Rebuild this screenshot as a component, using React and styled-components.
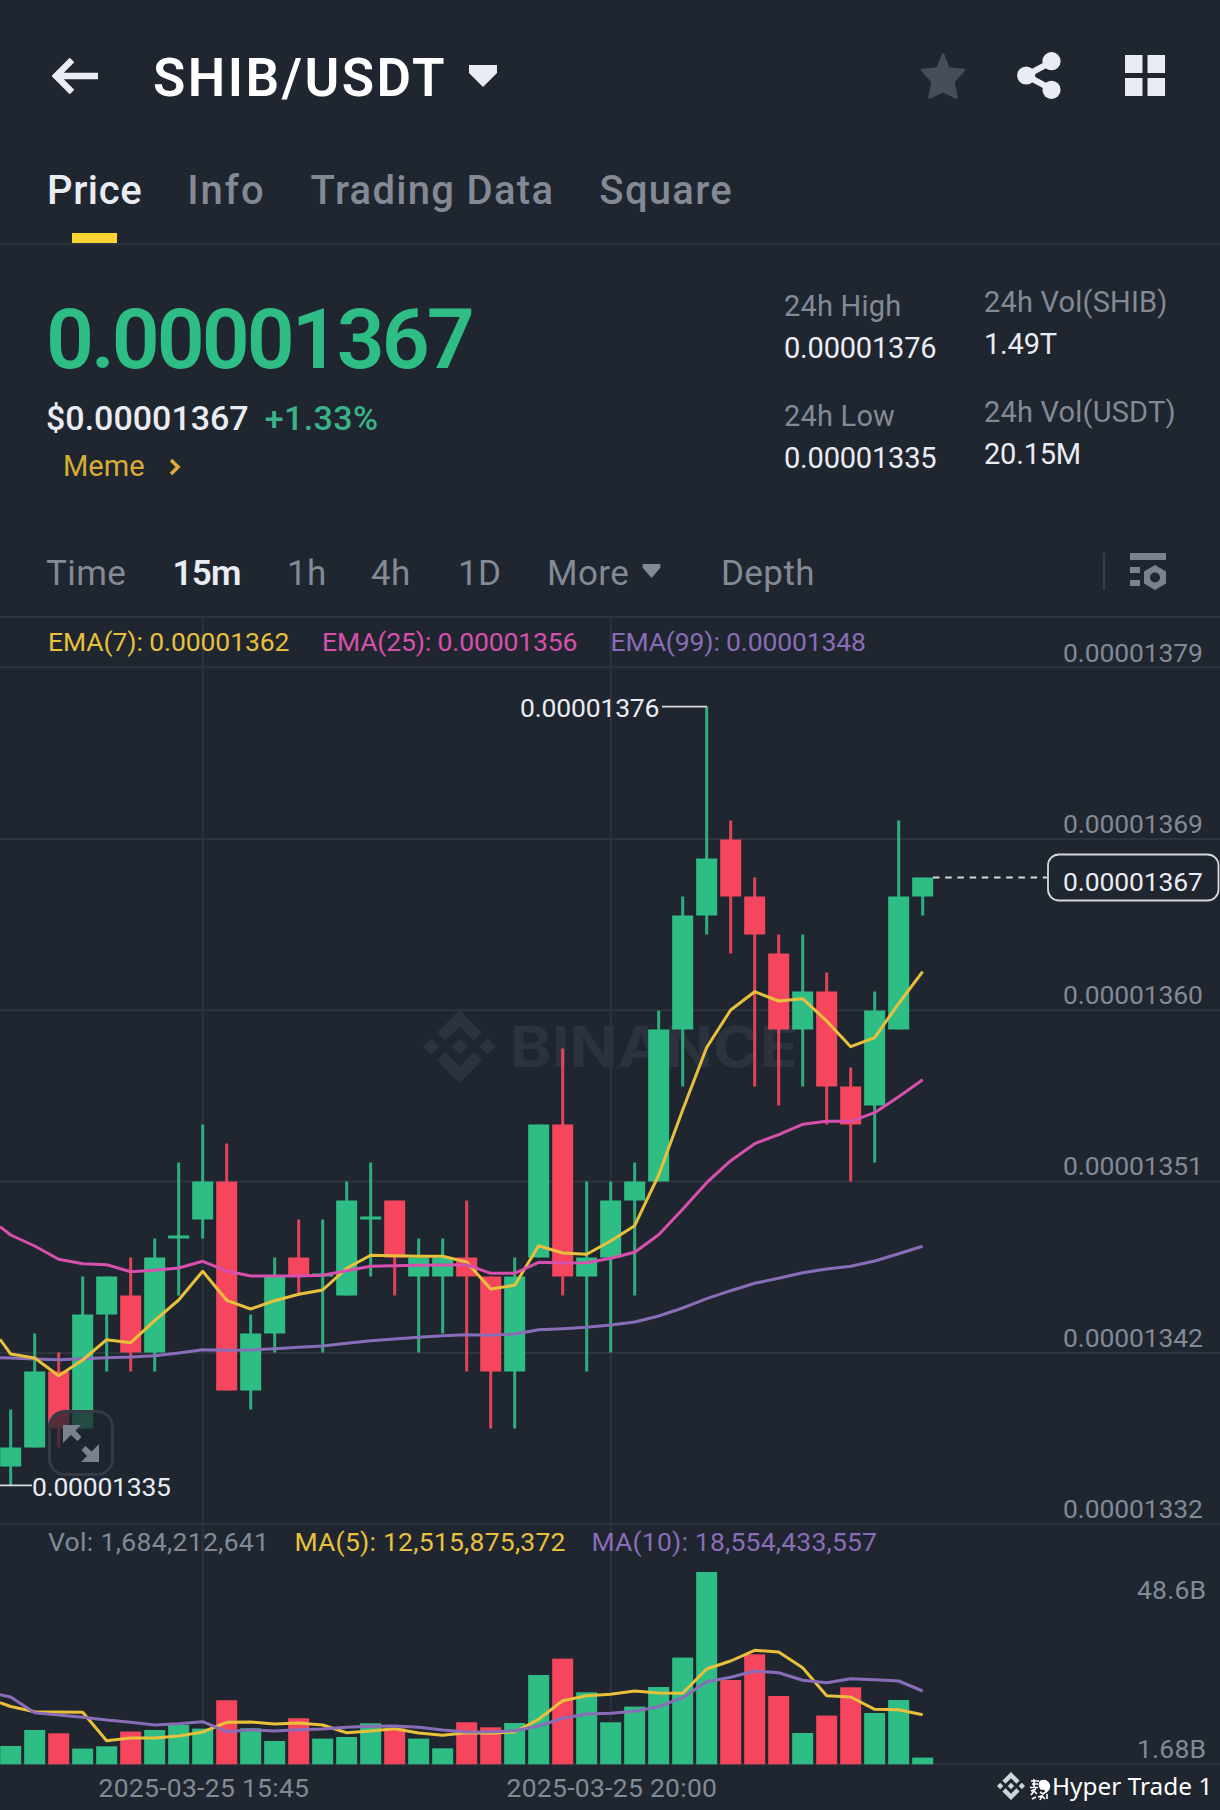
import styled, { createGlobalStyle } from "styled-components";

const COLORS = {
    bg: "#1f262f",
    line: "#2d343f",
    text: "#eaecf3",
    sub: "#848996",
    green: "#2ebd85",
    red: "#f6465d",
    yellow: "#e8c03c",
    pink: "#d850ae",
    purple: "#8a6db8",
};

// [body top, body bottom, high, low, up?, volume height]
const CANDLES = [
    [1337, 1336, 1339, 1335, 1, 18.3],
    [1341, 1337, 1343, 1337, 1, 34.3],
    [1341, 1338, 1342, 1337, 0, 31],
    [1344, 1338, 1346, 1338, 1, 15.7],
    [1346, 1344, 1346, 1341, 1, 18],
    [1345, 1342, 1347, 1341, 0, 32.7],
    [1347, 1342, 1348, 1341, 1, 34.3],
    [1348, 1348, 1352, 1345, 1, 39.3],
    [1351, 1349, 1354, 1348, 1, 35.7],
    [1351, 1340, 1353, 1340, 0, 64],
    [1343, 1340, 1344, 1339, 1, 36],
    [1346, 1343, 1347, 1342, 1, 23.3],
    [1347, 1346, 1349, 1345, 0, 46],
    [1346, 1346, 1349, 1342, 1, 25.7],
    [1350, 1345, 1351, 1345, 1, 27.3],
    [1349, 1349, 1352, 1346, 1, 41],
    [1350, 1347, 1350, 1345, 0, 36],
    [1347, 1346, 1348, 1342, 1, 25.7],
    [1347, 1346, 1348, 1343, 1, 16],
    [1347, 1346, 1350, 1341, 0, 42],
    [1346, 1341, 1346, 1338, 0, 37],
    [1346, 1341, 1347, 1338, 1, 41.3],
    [1354, 1347, 1354, 1347, 1, 89.3],
    [1354, 1346, 1358, 1345, 0, 105.7],
    [1347, 1346, 1351, 1341, 1, 72],
    [1350, 1347, 1351, 1342, 1, 42],
    [1351, 1350, 1352, 1345, 1, 57.7],
    [1359, 1351, 1360, 1351, 1, 77.3],
    [1365, 1359, 1366, 1356, 1, 106.7],
    [1368, 1365, 1376, 1364, 1, 192.3],
    [1369, 1366, 1370, 1363, 0, 84.3],
    [1366, 1364, 1367, 1356, 0, 110],
    [1363, 1359, 1364, 1355, 0, 68.3],
    [1361, 1359, 1364, 1356, 1, 31.3],
    [1361, 1356, 1362, 1354, 0, 48.7],
    [1356, 1354, 1357, 1351, 0, 77],
    [1360, 1355, 1361, 1352, 1, 51.3],
    [1366, 1359, 1370, 1359, 1, 64.3],
    [1367, 1366, 1367, 1365, 1, 6.7],
];

// the first value of every series sits on the left edge, before candle 0
const EMA7 = [
    1339.3, 1354, 1358, 1375.7, 1360, 1339.7, 1342.7, 1320.7, 1300, 1271.3, 1300.3, 1309, 1300.7,
    1294.3, 1290, 1268.3, 1255.3, 1255.7, 1256.3, 1256.3, 1262, 1289, 1285.3, 1245.7, 1253, 1254.3,
    1241, 1225.7, 1175, 1110, 1047.5, 1010, 991.7, 1001, 998.7, 1021, 1046.7, 1037.7, 1003.5, 971.7,
];
const EMA25 = [
    1226.7, 1235, 1246, 1259.3, 1263.7, 1264.7, 1271.7, 1270.3, 1268, 1261.3, 1271, 1276, 1276,
    1276, 1275.3, 1270.7, 1266.3, 1265.7, 1265.3, 1265, 1264.7, 1273.3, 1273.3, 1262.3, 1263,
    1262.7, 1258.3, 1252.3, 1234.7, 1209.3, 1182.7, 1160.7, 1143.7, 1134.7, 1124.3, 1121.3, 1121.3,
    1112.7, 1096.7, 1079.7,
];
const EMA99 = [
    1357.7, 1358, 1359, 1359.7, 1358.7, 1357.7, 1357, 1355.7, 1353, 1349.7, 1350.3, 1350, 1348.7,
    1347.3, 1346, 1343.3, 1340.7, 1339, 1337.3, 1335.7, 1334.7, 1335.3, 1334, 1329.7, 1328.7,
    1327.3, 1325, 1322, 1316, 1308, 1298.7, 1290.7, 1283.3, 1278.3, 1272.7, 1269, 1266.3, 1261,
    1253.7, 1246.3,
];
const VOL_MA5 = [
    1702.7, 1706.5, 1711.7, 1712, 1712.3, 1740.7, 1738, 1738, 1736, 1732, 1722.3, 1722, 1724, 1723,
    1725, 1732.7, 1731, 1728.7, 1733, 1735.3, 1732.7, 1733.3, 1732, 1719.3, 1700.7, 1695.7, 1694.3,
    1691, 1693, 1693.3, 1669, 1661, 1650.3, 1652, 1667.7, 1695.7, 1697, 1709.3, 1709.7, 1714.7,
];
const VOL_MA10 = [
    1694.7, 1697, 1712.7, 1715, 1717.3, 1720, 1722.3, 1725, 1723.7, 1721.7, 1731.7, 1729.7, 1731,
    1729.7, 1729, 1727.3, 1726.3, 1726, 1727.3, 1730, 1732, 1731.7, 1730.7, 1726, 1718.3, 1714,
    1713.3, 1711.3, 1706.7, 1697.7, 1681.7, 1677.3, 1671, 1672.7, 1680.3, 1682.7, 1678.7, 1679.7,
    1681, 1691,
];

const GRID_Y = [667.3, 839, 1010.3, 1181.5, 1353, 1524, 1764.3];
const GRID_X = [202.7, 610.7];
const VOLUME_BASE = 1764.3;

const AXIS = [
    ["0.00001379", 662],
    ["0.00001369", 833],
    ["0.00001360", 1004],
    ["0.00001351", 1175],
    ["0.00001342", 1347],
    ["0.00001332", 1518],
];

const LEGENDS = [
    ["EMA(7): 0.00001362", 48, 651, 241.5, COLORS.yellow],
    ["EMA(25): 0.00001356", 322, 651, 255.5, COLORS.pink],
    ["EMA(99): 0.00001348", 610.5, 651, 255.5, COLORS.purple],
    ["Vol: 1,684,212,641", 48, 1551, 221, COLORS.sub],
    ["MA(5): 12,515,875,372", 294.5, 1551, 271, COLORS.yellow],
    ["MA(10): 18,554,433,557", 591.5, 1551, 285.5, COLORS.purple],
    ["2025-03-25 15:45", 98.5, 1797, 210.5, COLORS.sub],
    ["2025-03-25 20:00", 506.5, 1797, 210.5, COLORS.sub],
    ["48.6B", 1137, 1599, 69, COLORS.sub],
    ["1.68B", 1137, 1758, 69, COLORS.sub],
];

const candleX = (i) => 10.67 + i * 24;
const priceY = (p) => 706.5 + (1376 - p) * 19;
const toPoints = (values) =>
    values.map((y, i) => `${i === 0 ? 0 : candleX(i - 1)},${y}`).join(" ");

function BinanceMark(props) {
    return (
        <svg viewBox="0 0 126.6 126.6" fill="currentColor" {...props}>
            <path d="M38.7 53.2 63.3 28.6 87.9 53.2 102.2 38.9 63.3 0 24.4 38.9z" />
            <path d="M0 63.3 14.3 49 28.6 63.3 14.3 77.6z" />
            <path d="M38.7 73.4 63.3 98 87.9 73.4 102.2 87.7 63.3 126.6 24.4 87.7z" />
            <path d="M98 63.3 112.3 49 126.6 63.3 112.3 77.6z" />
            <path d="M77.8 63.3 63.3 48.8 48.8 63.3 63.3 77.8z" />
        </svg>
    );
}

function Chart() {
    return (
        <ChartSvg viewBox="0 616 1220 1194">
            <g stroke={COLORS.line} strokeWidth="2">
                <line x1="0" x2="1220" y1="617" y2="617" />
                {GRID_Y.map((y) => (
                    <line key={y} x1="0" x2="1220" y1={y} y2={y} />
                ))}
                {GRID_X.map((x) => (
                    <line key={x} x1={x} x2={x} y1="617" y2="1764" />
                ))}
            </g>

            <g color="#2c333e">
                <BinanceMark x="423" y="1010" width="73" height="73" />
                <WatermarkText x="510" y="1067" textLength="288" lengthAdjust="spacingAndGlyphs">
                    BINANCE
                </WatermarkText>
            </g>

            {CANDLES.map(([top, bottom, high, low, up, volume], i) => {
                const x = candleX(i);
                const doji = top === bottom;
                return (
                    <g key={i} fill={up ? COLORS.green : COLORS.red}>
                        <rect
                            x={x - 1.5}
                            y={priceY(high)}
                            width="3"
                            height={priceY(low) - priceY(high)}
                            opacity="0.9"
                        />
                        <rect
                            x={x - 10.5}
                            y={priceY(top) - (doji ? 3 : 0)}
                            width="21"
                            height={doji ? 3 : priceY(bottom) - priceY(top)}
                        />
                        <rect x={x - 10.5} y={VOLUME_BASE - volume} width="21" height={volume} />
                    </g>
                );
            })}

            <g fill="none" strokeWidth="3" strokeLinejoin="round">
                <polyline points={toPoints(EMA99)} stroke={COLORS.purple} />
                <polyline points={toPoints(EMA7)} stroke={COLORS.yellow} />
                <polyline points={toPoints(EMA25)} stroke={COLORS.pink} />
                <polyline points={toPoints(VOL_MA5)} stroke={COLORS.yellow} />
                <polyline points={toPoints(VOL_MA10)} stroke={COLORS.purple} />
            </g>

            {LEGENDS.map(([label, x, y, width, color]) => (
                <ChartText key={label} x={x} y={y} textLength={width} fill={color}>
                    {label}
                </ChartText>
            ))}
            {AXIS.map(([label, y]) => (
                <ChartText key={label} x="1063" y={y} textLength="140" fill={COLORS.sub}>
                    {label}
                </ChartText>
            ))}

            <g stroke="#d5d8df" strokeWidth="1.8" fill="none">
                <line x1="662" x2="707" y1="706.7" y2="706.7" />
                <line x1="0" x2="32" y1="1485.4" y2="1485.4" />
                <line x1="933" x2="1047" y1="877.5" y2="877.5" strokeDasharray="6.5 5.7" />
                <rect x="1048" y="854.5" width="170.5" height="46" rx="11" fill={COLORS.bg} />
            </g>
            <ChartText x="520" y="717" textLength="139.5" fill={COLORS.text}>
                0.00001376
            </ChartText>
            <ChartText x="32" y="1496" textLength="139" fill={COLORS.text}>
                0.00001335
            </ChartText>
            <ChartText x="1063" y="890.5" textLength="140" fill={COLORS.text}>
                0.00001367
            </ChartText>
        </ChartSvg>
    );
}

function App() {
    return (
        <Page>
            <GlobalStyle />
            <Header>
                <BackIcon viewBox="0 0 46 36">
                    <path d="M20 2 4 18 20 34M4 18H46" />
                </BackIcon>
                <PairName>SHIB/USDT</PairName>
                <Caret width={28} height={22} viewBox="0 0 28 22" $color={COLORS.text}>
                    <path d="M0 0h28v8L14 22 0 8z" />
                </Caret>
                <HeaderIcons>
                    <svg width="46" height="48" viewBox="0 0 46 48" fill="#474d5b">
                        <path
                            d="M23 2.5 28.5 16.5 44 18 33.5 29.5 36.5 45.5 23 39 9.5 45.5 12.5 29.5 2 18 17.5 16.5z"
                            stroke="#474d5b"
                            strokeWidth="2.5"
                            strokeLinejoin="round"
                        />
                    </svg>
                    <svg width="44" height="47" viewBox="0 0 44 47" fill={COLORS.text}>
                        <path d="M35 9.5 9 23.5 35 37.5" fill="none" stroke={COLORS.text} strokeWidth="6" />
                        <circle cx="34.5" cy="9.2" r="9.1" />
                        <circle cx="9.2" cy="23.5" r="9.1" />
                        <circle cx="34.5" cy="37.8" r="9.1" />
                    </svg>
                    <svg width="40" height="41" viewBox="0 0 40 41" fill={COLORS.text}>
                        <path d="M0 0h17.5v18H0zM22.5 0H40v18H22.5zM0 23h17.5v18H0zM22.5 23H40v18H22.5z" />
                    </svg>
                </HeaderIcons>
            </Header>

            <Tabs>
                <Tab $active>Price</Tab>
                <Tab $spacing={2}>Info</Tab>
                <Tab>Trading Data</Tab>
                <Tab>Square</Tab>
            </Tabs>

            <Summary>
                <PriceBox>
                    <LastPrice>0.00001367</LastPrice>
                    <FiatRow>
                        <span>$0.00001367</span>
                        <Change>+1.33%</Change>
                    </FiatRow>
                    <Tag>
                        Meme
                        <svg width="12" height="18" viewBox="0 0 12 18">
                            <path d="M2 2 9 9 2 16" fill="none" stroke="currentColor" strokeWidth="3.6" />
                        </svg>
                    </Tag>
                </PriceBox>
                <StatColumn $width={200} $top={3.5}>
                    <StatLabel>24h High</StatLabel>
                    <StatValue>0.00001376</StatValue>
                    <StatLabel>24h Low</StatLabel>
                    <StatValue>0.00001335</StatValue>
                </StatColumn>
                <StatColumn $width={236} $top={0}>
                    <StatLabel>24h Vol(SHIB)</StatLabel>
                    <StatValue>1.49T</StatValue>
                    <StatLabel>24h Vol(USDT)</StatLabel>
                    <StatValue>20.15M</StatValue>
                </StatColumn>
            </Summary>

            <Intervals>
                <Interval $width={126.5}>Time</Interval>
                <Interval $width={114.5} $active>
                    15m
                </Interval>
                <Interval $width={84}>1h</Interval>
                <Interval $width={87}>4h</Interval>
                <Interval $width={89}>1D</Interval>
                <Interval $width={174}>
                    More
                    <Caret width={19} height={14} viewBox="0 0 28 22" $color={COLORS.sub}>
                        <path d="M0 0h28v6L14 22 0 6z" />
                    </Caret>
                </Interval>
                <Interval $width={100}>Depth</Interval>
                <Settings>
                    <svg width="36" height="37" viewBox="0 0 36 37" fill="#7c818e">
                        <path d="M0 0h36v7H0zM0 14h10v6H0zM0 27h10v6H0z" />
                        <path
                            fillRule="evenodd"
                            d="M25 12 36 18.5v12L25 37 14 30.5v-12zM25 19.5a5 5 0 1 0 0 10 5 5 0 0 0 0-10z"
                        />
                    </svg>
                </Settings>
            </Intervals>

            <ChartArea>
                <Chart />
                <ExpandButton>
                    <svg width="36" height="37" viewBox="0 0 36 37" fill="#7c818e">
                        <path d="M0 0h18l-5.5 5.5 6 6.5-4 4-6.5-6L0 18z" />
                        <path d="M36 37H18l6-6-5.5-6 4-4 6 5.5L36 19z" />
                    </svg>
                </ExpandButton>
                <Author>
                    <BinanceMark width="28" height="28" />
                    <svg width="21" height="23" viewBox="0 0 21 23" fill="none" stroke="#fff" strokeWidth="1.6">
                        <path d="M1 3h8M2 6h6M0 9.5h8M4 1v9M1 13l5-2M1 17l3-4 3 3M2 21l4-2" />
                        <path d="M10 14l3 2 4-3M8 19l4-1 3 3M10 22l2-4M17 16v5" />
                        <path d="M9 4c3-4 10-2 11 3 1 4-2 7-5 8 1-3-1-4-4-3-2-2-3-5-2-8z" fill="#fff" stroke="none" />
                    </svg>
                    <AuthorName>Hyper Trade 1</AuthorName>
                </Author>
            </ChartArea>
        </Page>
    );
}

const GlobalStyle = createGlobalStyle`
    body {
        margin: 0;
        background: ${COLORS.bg};
    }
`;

const Page = styled.div`
    width: 1220px;
    height: 1810px;
    overflow: hidden;
    background: ${COLORS.bg};
    color: ${COLORS.text};
    font-family: Roboto, "Liberation Sans", sans-serif;
`;

const Header = styled.header`
    display: flex;
    align-items: center;
    height: 151px;
    padding: 0 55px 0 52px;
`;

const BackIcon = styled.svg`
    width: 46px;
    height: 36px;
    fill: none;
    stroke: ${COLORS.text};
    stroke-width: 6.5;
`;

const PairName = styled.h1`
    width: 291px;
    margin: 4px 0 0 55px;
    color: #fff;
    font-size: 53px;
    font-weight: 600;
    letter-spacing: 2.5px;
    white-space: nowrap;
`;

const Caret = styled.svg`
    flex: none;
    margin-left: ${({ width }) => (width > 20 ? 25 : 13)}px;
    margin-bottom: ${({ width }) => (width > 20 ? 0 : 5)}px;
    fill: ${({ $color }) => $color};
`;

const HeaderIcons = styled.div`
    display: flex;
    align-items: center;
    margin-left: auto;

    svg:nth-child(2) {
        margin: 0 64px 0 51px;
    }
`;

const Tabs = styled.nav`
    display: flex;
    gap: 45px;
    height: 94px;
    padding-left: 47px;
    box-sizing: border-box;
    border-bottom: 2px solid ${COLORS.line};
`;

const Tab = styled.div`
    display: flex;
    flex-direction: column;
    align-items: center;
    justify-content: space-between;
    padding-top: 16px;
    color: ${({ $active }) => ($active ? COLORS.text : COLORS.sub)};
    font-size: 40px;
    font-weight: 500;
    line-height: 48px;
    letter-spacing: ${({ $active, $spacing = 1.3 }) => ($active ? 0.6 : $spacing)}px;

    &::after {
        content: "";
        width: 45px;
        height: 10px;
        background: ${({ $active }) => ($active ? "#fcd535" : "transparent")};
    }
`;

const Summary = styled.section`
    display: flex;
    height: 287px;
    padding-top: 40px;
    box-sizing: border-box;
`;

const PriceBox = styled.div`
    width: 784px;
    padding: 2px 0 0 46px;
    box-sizing: border-box;
`;

const LastPrice = styled.div`
    color: ${COLORS.green};
    font-size: 84px;
    font-weight: 600;
    line-height: 106px;
    letter-spacing: -3px;
`;

const FiatRow = styled.div`
    display: flex;
    gap: 16px;
    font-size: 34px;
    font-weight: 500;
    line-height: 51px;
`;

const Change = styled.span`
    color: #39b388;
    letter-spacing: 0.4px;
`;

const Tag = styled.div`
    display: flex;
    align-items: center;
    gap: 24px;
    padding-left: 17px;
    color: #d8ac35;
    font-size: 29px;
    line-height: 45px;
`;

const StatColumn = styled.div`
    width: ${({ $width }) => $width}px;
    padding-top: ${({ $top }) => $top}px;
`;

const StatLabel = styled.div`
    color: ${COLORS.sub};
    font-size: 29px;
    font-weight: 400;
    line-height: 34px;
    letter-spacing: 0.2px;
`;

const StatValue = styled.div`
    margin: 8px 0 34px;
    font-size: 29px;
    line-height: 34px;
    letter-spacing: -0.2px;
`;

const Intervals = styled.div`
    display: flex;
    align-items: center;
    height: 84px;
    padding: 0 54px 6px 46px;
    box-sizing: border-box;
`;

const Interval = styled.div`
    display: flex;
    align-items: center;
    width: ${({ $width }) => $width}px;
    padding-top: 5px;
    color: ${({ $active }) => ($active ? COLORS.text : COLORS.sub)};
    font-size: 35px;
    font-weight: ${({ $active }) => ($active ? 600 : 400)};
    letter-spacing: ${({ $active }) => ($active ? -0.8 : 0.4)}px;
`;

const Settings = styled.div`
    display: flex;
    margin-left: auto;
    padding-left: 25px;
    border-left: 2px solid #3a404b;
`;

const ChartArea = styled.div`
    position: relative;
    height: 1194px;
`;

const ChartSvg = styled.svg`
    display: block;
    width: 1220px;
    height: 1194px;
`;

const ChartText = styled.text`
    font-size: 26.5px;
`;

const WatermarkText = styled.text`
    fill: currentColor;
    font-family: Inter, sans-serif;
    font-size: 56px;
    font-weight: 700;
`;

const ExpandButton = styled.button`
    position: absolute;
    left: 48px;
    top: 794px;
    display: flex;
    align-items: center;
    justify-content: center;
    width: 66px;
    height: 66px;
    padding: 0;
    border: 3px solid #343b47;
    border-radius: 17px;
    background: rgba(31, 38, 47, 0.75);
`;

const Author = styled.div`
    position: absolute;
    left: 997px;
    bottom: 7px;
    display: flex;
    align-items: center;
    gap: 5px;
    color: #d0d4dd;

    svg:nth-child(2) {
        margin-top: 6px;
    }
`;

const AuthorName = styled.span`
    margin-left: -4px;
    color: #fff;
    font-family: "Noto Sans", sans-serif;
    font-size: 24.4px;
    line-height: 34px;
    white-space: nowrap;
`;

export default App;
